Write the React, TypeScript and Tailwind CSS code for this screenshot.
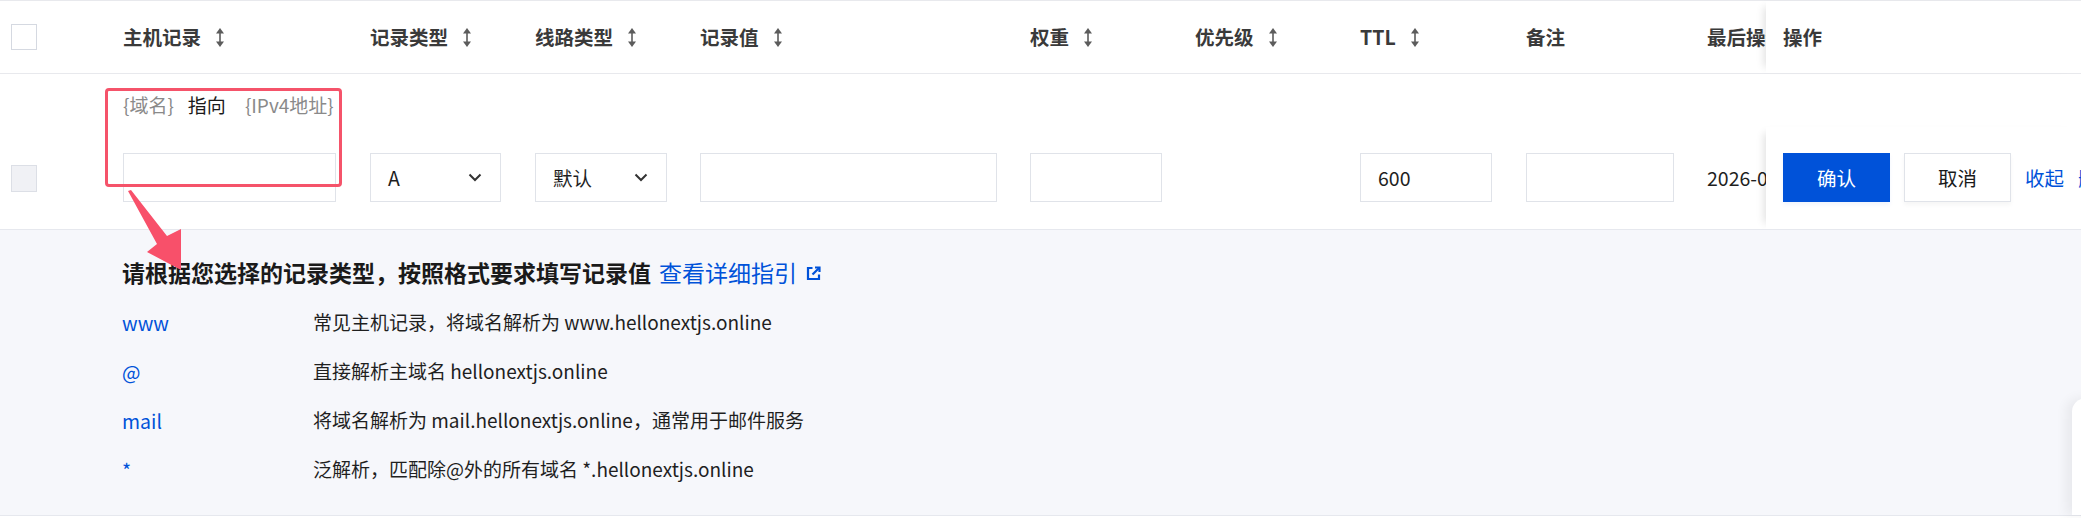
import { ReactNode } from "react";

const COLS =
  "grid grid-cols-[123px_247px_165px_165px_330px_165px_165px_166px_181px_59px_315px]";

const hints: { host: string; desc: string }[] = [
  { host: "www", desc: "常见主机记录，将域名解析为 www.hellonextjs.online" },
  { host: "@", desc: "直接解析主域名 hellonextjs.online" },
  { host: "mail", desc: "将域名解析为 mail.hellonextjs.online，通常用于邮件服务" },
  { host: "*", desc: "泛解析，匹配除@外的所有域名 *.hellonextjs.online" },
];

function SortIcon() {
  return (
    <svg width="8" height="19" viewBox="0 0 8 19" className="ml-[15px] shrink-0">
      <path d="M0 5.5 4 0l4 5.5z" fill="#5c5c5c" />
      <rect x="3.2" y="5" width="1.6" height="9" fill="#5c5c5c" />
      <path d="M0 13.5 4 19l4-5.5z" fill="#5c5c5c" />
    </svg>
  );
}

function Head({ label, sort }: { label: string; sort?: boolean }) {
  return (
    <div className="flex items-center whitespace-nowrap">
      <span>{label}</span>
      {sort && <SortIcon />}
    </div>
  );
}

function Chevron() {
  return (
    <svg width="14" height="9" viewBox="0 0 14 9" className="shrink-0">
      <path d="M1.5 1.5 7 7l5.5-5.5" fill="none" stroke="#333" strokeWidth="2" />
    </svg>
  );
}

function Box({ w, children }: { w: string; children?: ReactNode }) {
  return (
    <div
      className={`flex h-[49px] items-center border border-[#e0e3e9] bg-white pl-[17px] pr-[18px] text-[#1f1f1f] ${w}`}
    >
      {children}
    </div>
  );
}

function Select({ w, value }: { w: string; value: string }) {
  return (
    <Box w={w}>
      <span className="flex-1">{value}</span>
      <Chevron />
    </Box>
  );
}

function ExternalIcon() {
  return (
    <svg width="15" height="15" viewBox="0 0 15 15" className="ml-[9px] mt-[3px]">
      <path d="M6.5 2H2v11h11V8.5" fill="none" stroke="#0052d9" strokeWidth="2.2" />
      <path d="M9 1.5h4.5V6" fill="none" stroke="#0052d9" strokeWidth="2.2" />
      <path d="M13.3 1.7 6.5 8.5" fill="none" stroke="#0052d9" strokeWidth="2.2" />
    </svg>
  );
}

export default function App() {
  return (
    <div
      className="relative h-[518px] w-[2081px] overflow-hidden bg-white text-[19.5px] text-[#1f1f1f]"
      style={{ fontFamily: '"Noto Sans CJK SC", "Noto Sans", sans-serif' }}
    >
      {/* header */}
      <div
        className={`${COLS} h-[74px] items-center border-y border-[#e8e9ed] font-bold text-[#3a3a3a]`}
      >
        <div className="pl-[11px]">
          <div className="h-[26px] w-[26px] border border-[#d5d9e1] bg-white" />
        </div>
        <Head label="主机记录" sort />
        <Head label="记录类型" sort />
        <Head label="线路类型" sort />
        <Head label="记录值" sort />
        <Head label="权重" sort />
        <Head label="优先级" sort />
        <Head label="TTL" sort />
        <Head label="备注" />
        <div className="overflow-hidden whitespace-nowrap">最后操作时间</div>
        <div className="relative z-10 flex h-full items-center bg-white pl-[17px] shadow-[-8px_0_8px_-6px_rgba(0,0,0,0.12)]">
          操作
        </div>
      </div>

      {/* editing row */}
      <div className={`${COLS} h-[155px] items-end`}>
        <div className="pb-[37px] pl-[11px]">
          <div className="h-[27px] w-[26px] border border-[#dcdfe6] bg-[#f0f1f5]" />
        </div>
        <div className="flex h-full flex-col pb-[27px] pt-[18px]">
          <div className="flex h-[26px] items-center whitespace-nowrap text-[19px] leading-[26px]">
            <span className="text-[#8a8a8a]">{"{域名}"}</span>
            <span className="ml-[14px] text-[#1a1a1a]">指向</span>
            <span className="ml-[19px] text-[#8a8a8a]">{"{IPv4地址}"}</span>
          </div>
          <div className="mt-auto">
            <Box w="w-[213px]" />
          </div>
        </div>
        <div className="pb-[27px]">
          <Select w="w-[131px]" value="A" />
        </div>
        <div className="pb-[27px]">
          <Select w="w-[132px]" value="默认" />
        </div>
        <div className="pb-[27px]">
          <Box w="w-[297px]" />
        </div>
        <div className="pb-[27px]">
          <Box w="w-[132px]" />
        </div>
        <div />
        <div className="pb-[27px]">
          <Box w="w-[132px]">600</Box>
        </div>
        <div className="pb-[27px]">
          <Box w="w-[148px]" />
        </div>
        <div className="mb-[27px] flex h-[49px] items-center overflow-hidden whitespace-nowrap">
          2026-01-12 10:32:15
        </div>
        <div className="relative z-10 flex h-full flex-col">
          <div className="h-[53px]" />
          <div className="flex flex-1 items-end gap-[14px] whitespace-nowrap bg-white pb-[27px] pl-[17px] shadow-[-8px_0_8px_-6px_rgba(0,0,0,0.12)]">
            <button className="h-[49px] w-[107px] shrink-0 bg-[#0052d9] text-white shadow-[0_3px_4px_rgba(0,82,217,0.06)]">
              确认
            </button>
            <button className="h-[49px] w-[107px] shrink-0 border border-[#e0e3e9] bg-white text-[#1a1a1a] shadow-[0_3px_4px_rgba(0,0,0,0.04)]">
              取消
            </button>
            <div className="flex h-[49px] shrink-0 items-center gap-[14px] text-[#0052d9]">
              <span>收起</span>
              <span>删除</span>
            </div>
          </div>
        </div>
      </div>

      {/* guide panel */}
      <div className="relative z-20 h-[287px] border-y border-[#e6e8ee] bg-[#f6f7fb] pl-[122px] pt-[26px]">
        <div className="flex items-center whitespace-nowrap text-[23px] leading-[32px]">
          <span className="font-bold text-[#1a1a1a]">
            请根据您选择的记录类型，按照格式要求填写记录值
          </span>
          <span className="ml-[8px] text-[#0052d9]">查看详细指引</span>
          <ExternalIcon />
        </div>
        <div className="mt-[10px] grid grid-cols-[191px_1fr]">
          {hints.map((h) => (
            <div key={h.host} className="contents">
              <div className="flex h-[49px] items-center text-[#0052d9]">{h.host}</div>
              <div className="flex h-[49px] items-center whitespace-nowrap text-[19px] text-[#1f1f1f]">
                {h.desc}
              </div>
            </div>
          ))}
        </div>
      </div>

      {/* annotation: red box and arrow */}
      <div className="absolute left-[105px] top-[88px] z-30 h-[99px] w-[237px] rounded-[4px] border-[3px] border-[#f5536a]" />
      <svg className="absolute left-0 top-0 z-30" width="260" height="300" viewBox="0 0 260 300">
        <polygon
          points="128,191 131,190 167,236 181,229 181,270 147,252 157,244"
          fill="#f8506a"
        />
      </svg>

      {/* floating handle on the right edge */}
      <div className="absolute left-[2072px] top-[398px] z-30 h-[117px] w-[30px] rounded-tl-[14px] bg-white shadow-[-6px_0_12px_rgba(0,0,0,0.06)]" />
    </div>
  );
}
